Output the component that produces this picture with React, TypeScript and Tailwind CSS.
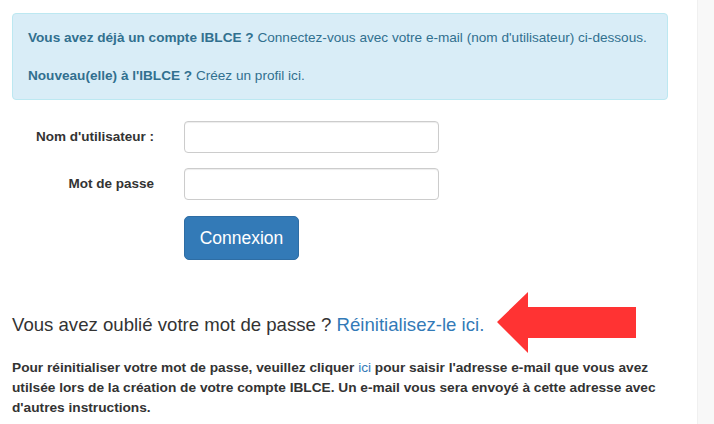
import React from 'react';

const App: React.FC = () => {
  return (
    <div
      className="relative flex min-h-[424px] w-[714px] bg-white text-[#333]"
      style={{ fontFamily: '"Liberation Sans", Arial, sans-serif' }}
    >
      {/* Main column */}
      <div className="w-[697px] shrink-0 pl-3 pr-[29px] pt-[13px]">
        {/* Info alert */}
        <div className="rounded-[4px] border border-[#bce8f1] bg-[#d9edf7] px-[15px] py-[14px] text-[13.6px] leading-[19px] text-[#31708f]">
          <p className="mb-[19px]">
            <strong>Vous avez déjà un compte IBLCE ?</strong> Connectez-vous avec votre e-mail (nom d'utilisateur) ci-dessous.
          </p>
          <p>
            <strong>Nouveau(elle) à l'IBLCE ?</strong> Créez un profil ici.
          </p>
        </div>

        {/* Login form */}
        <div className="mt-[21px] grid grid-cols-[142px_255px] items-center gap-x-[30px] gap-y-[15px]">
          <label htmlFor="username" className="text-right text-[13.5px] font-bold">
            Nom d'utilisateur :
          </label>
          <input
            id="username"
            type="text"
            className="h-[32px] w-full rounded-[4px] border border-[#ccc] bg-white px-3 shadow-[inset_0_1px_1px_rgba(0,0,0,0.075)]"
          />
          <label htmlFor="password" className="text-right text-[13.5px] font-bold">
            Mot de passe
          </label>
          <input
            id="password"
            type="password"
            className="h-[32px] w-full rounded-[4px] border border-[#ccc] bg-white px-3 shadow-[inset_0_1px_1px_rgba(0,0,0,0.075)]"
          />
          <div />
          <button
            type="button"
            className="mt-[1px] h-[44px] w-[115px] rounded-[5px] border border-[#2e6da4] bg-[#337ab7] text-[17.5px] text-white"
          >
            Connexion
          </button>
        </div>

        {/* Forgot password */}
        <h3 className="mt-[54px] text-[18.6px] leading-[21px] font-normal">
          Vous avez oublié votre mot de passe ? <a className="text-[#337ab7]">Réinitialisez-le ici.</a>
        </h3>
        <p className="mt-[23px] text-[13.7px] leading-[20px] font-bold">
          Pour réinitialiser votre mot de passe, veuillez cliquer <a className="font-normal text-[#337ab7]">ici</a> pour saisir l'adresse e-mail que vous avez utilsée lors de la création de votre compte IBLCE. Un e-mail vous sera envoyé à cette adresse avec d'autres instructions.
        </p>
      </div>

      {/* Side strip */}
      <div className="flex-1 border-l border-[#f0f0f0] bg-[#f8f8f8]" />

      {/* Red annotation arrow */}
      <svg className="absolute left-[497px] top-[292px]" width="140" height="62" viewBox="0 0 140 62">
        <polygon points="0,30 31,0 31,15 139,15 139,46 31,46 31,61" fill="#ff3333" />
      </svg>
    </div>
  );
};

export default App;
